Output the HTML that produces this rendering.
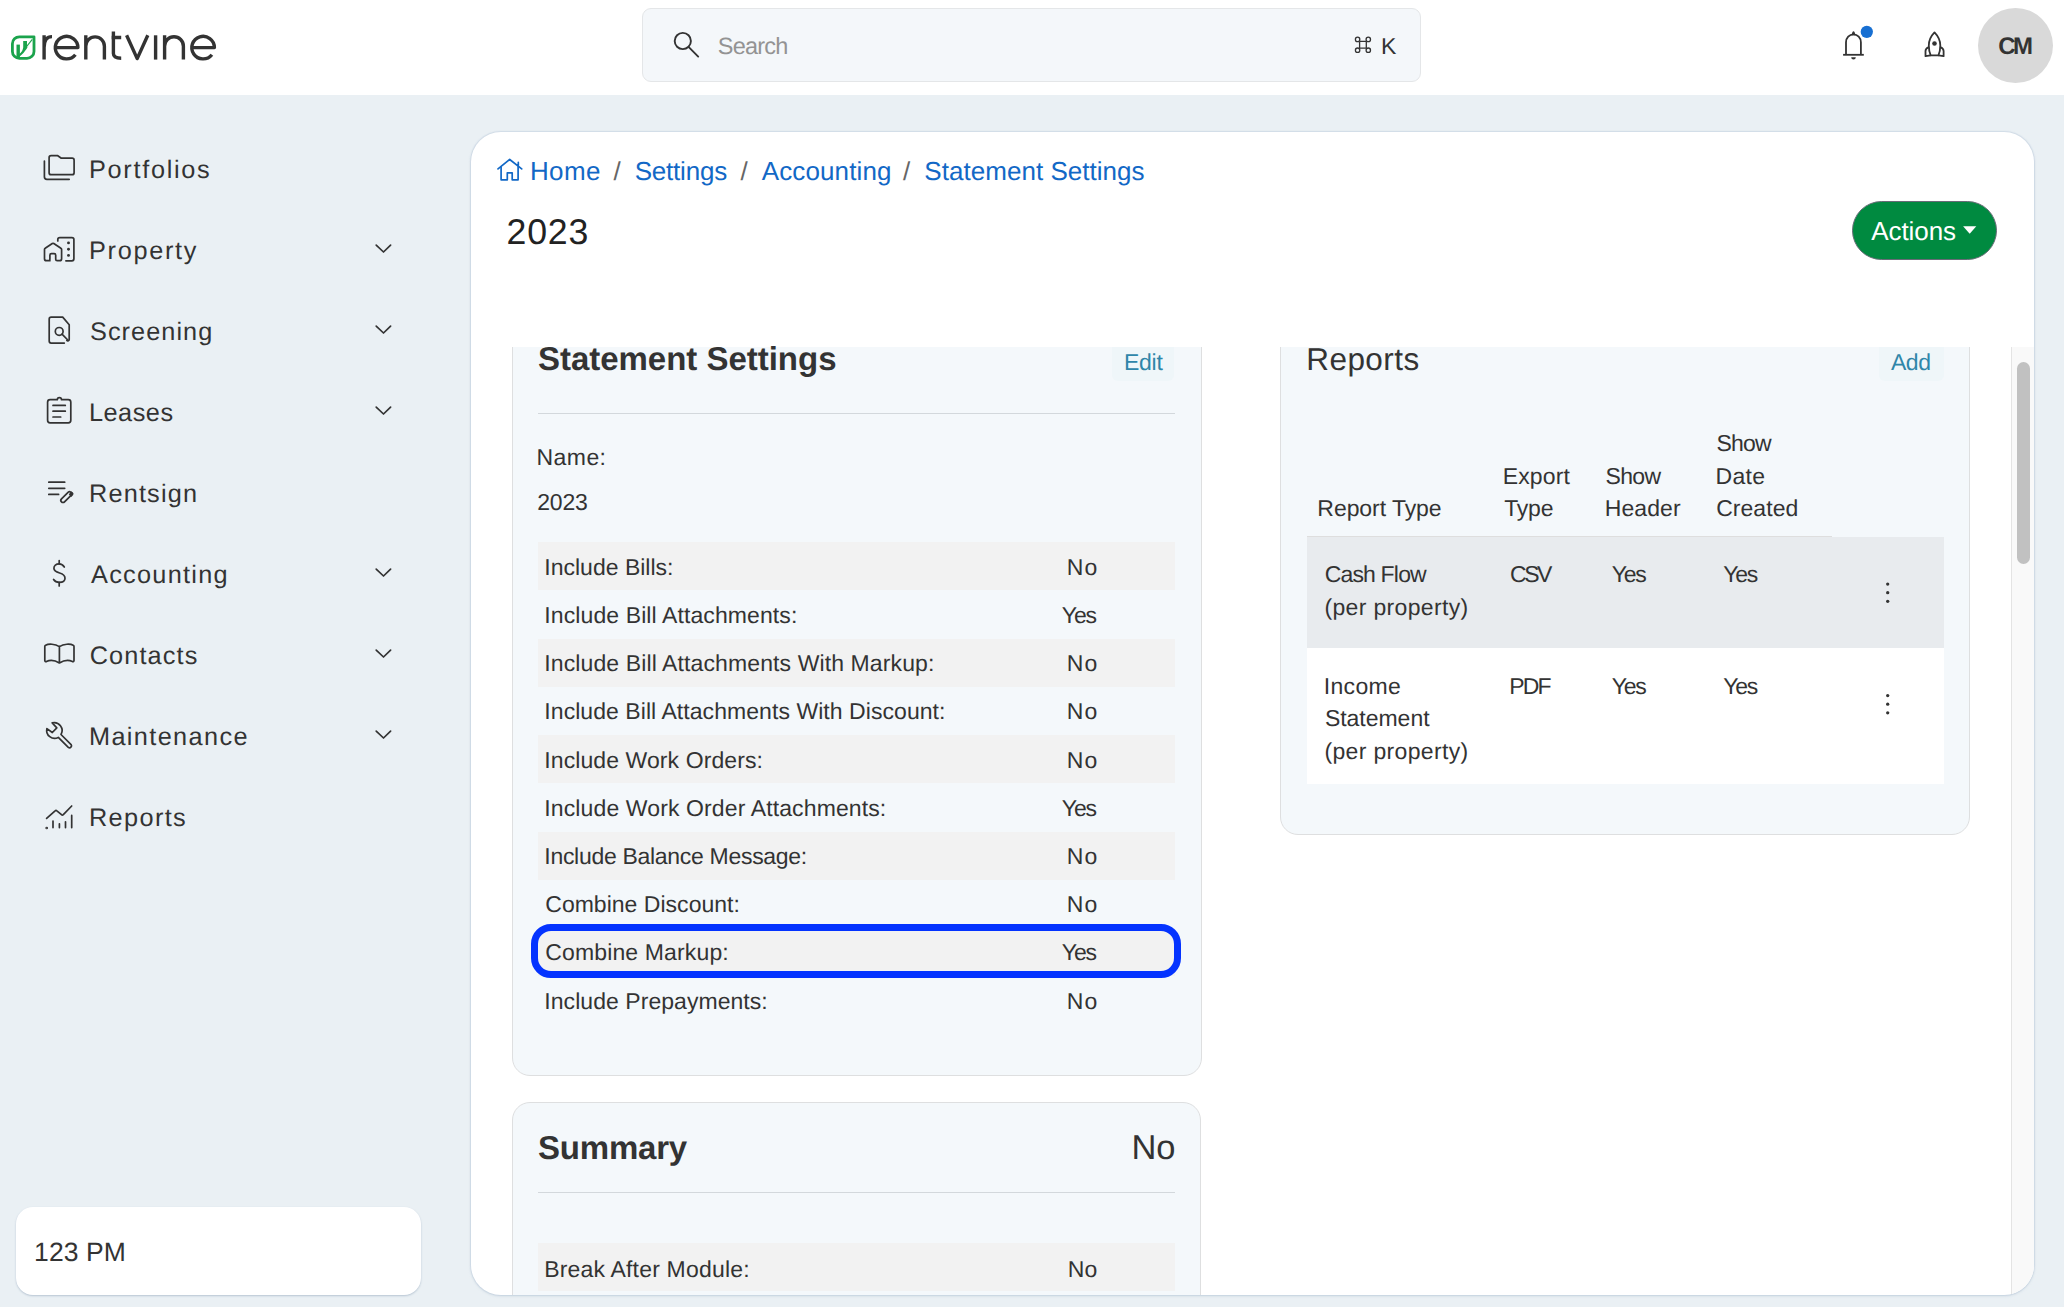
<!DOCTYPE html>
<html><head><meta charset="utf-8"><title>Statement Settings</title>
<style>
html,body{margin:0;padding:0;}
body{width:2064px;height:1307px;overflow:hidden;position:relative;background:#eaf0f4;font-family:"Liberation Sans",sans-serif;}
.a{position:absolute;box-sizing:border-box;}
.t{position:absolute;white-space:nowrap;font-family:"Liberation Sans",sans-serif;text-rendering:geometricPrecision;}
svg{position:absolute;overflow:visible;}

</style></head>
<body>
<!-- header -->
<div class="a" style="left:0;top:0;width:2064px;height:95px;background:#fff;"></div>
<svg style="left:0;top:0" width="240" height="95" viewBox="0 0 240 95">
  <g fill="none" stroke="#1ba34c" stroke-width="2.8" stroke-linejoin="round">
    <path d="M34 36.8 V51.4 a7 7 0 0 1 -7 7 H19.4 a7 7 0 0 1 -7 -7 V43.8 a7 7 0 0 1 7 -7 Z"/>
  </g>
  <g fill="#1ba34c">
    <rect x="16.5" y="44.6" width="3.4" height="13"/>
    <path d="M23.2 41 H27 V47.5 L28.6 45.6 Q24.5 53.5 17.8 57.8 L19.9 53.8 Q23.2 50.5 23.2 47.5 Z"/>
  </g>
  <path d="M32.3 39.4 L18.2 57" stroke="#1ba34c" stroke-width="1.1" fill="none"/>
  <g fill="none" stroke="#333" stroke-width="3.4" stroke-linejoin="round">
    <path d="M44.1 35.3 V59.6 M44.1 47.5 C44.1 40 47 36.6 52 36.6"/>
    <path d="M55.3 47.6 H77.9 A11.3 11.3 0 1 0 75.4 54.7"/>
    <path d="M85.8 35.3 V59.6 M85.8 46.2 A9.2 9.2 0 0 1 104.4 46.2 V59.6"/>
    <path d="M113.4 31.4 V53.5 Q113.4 58.2 121.2 58.2 M111.5 37.5 H121.2"/>
    <path d="M126.6 35.3 L137.2 58.6 L147.8 35.3"/>
    <path d="M155.6 35.3 V59.6"/>
    <path d="M164.6 35.3 V59.6 M164.6 46.2 A9.2 9.2 0 0 1 183.4 46.2 V59.6"/>
    <path d="M191.8 47.6 H214.4 A11.3 11.3 0 1 0 211.9 54.7"/>
  </g>
</svg>
<div class="a" style="left:642px;top:8px;width:778.5px;height:73.5px;background:#f4f7fa;border:1.3px solid #e4e6e8;border-radius:9px;"></div>
<svg style="left:0;top:0" width="2064" height="95" viewBox="0 0 2064 95">
  <g fill="none" stroke="#333" stroke-width="1.9" stroke-linecap="round">
    <circle cx="682.8" cy="41" r="8.1"/>
    <path d="M688.8 47.2 L698.2 56.6"/>
  </g>
  <g fill="none" stroke="#333" stroke-width="1.3">
    <path d="M1359.6 41.4 V48.2 M1366.3 41.4 V48.2 M1359.6 41.4 H1366.3 M1359.6 48.2 H1366.3"/>
    <path d="M1359.6 41.4 A2.7 2.7 0 1 1 1359.6 41.4 Z"/>
    <circle cx="1357.6" cy="39.4" r="2.2"/><circle cx="1368.3" cy="39.4" r="2.2"/>
    <circle cx="1357.6" cy="50.2" r="2.2"/><circle cx="1368.3" cy="50.2" r="2.2"/>
  </g>
  <!-- bell -->
  <g fill="none" stroke="#333" stroke-width="1.8">
    <path d="M1846 54.8 V42.3 A7.45 7.95 0 0 1 1860.9 42.3 V54.8"/>
    <path d="M1843.1 54.8 H1863.8"/>
  </g>
  <path d="M1851.6 35.2 Q1852.2 31.3 1853.5 31.3 Q1854.8 31.3 1855.4 35.2 Z" fill="#333"/>
  <path d="M1851.2 57.2 H1855.8 A2.3 2.3 0 0 1 1851.2 57.2 Z" fill="#333"/>
  <circle cx="1866.8" cy="31.8" r="6.15" fill="#176fd2"/>
  <!-- rocket -->
  <g fill="none" stroke="#333" stroke-width="1.8" stroke-linejoin="round">
    <path d="M1934.5 32.4 C1929.5 37.5 1928.8 42 1928.8 45.5 C1928.8 50 1929.6 52.8 1930.7 55.3 H1938.4 C1939.5 52.8 1940.3 50 1940.3 45.5 C1940.3 42 1939.5 37.5 1934.5 32.4 Z"/>
    <path d="M1928.9 47.2 C1926.8 48 1925.5 49.2 1925.5 51 V56.2 L1930.6 55.3"/>
    <path d="M1940.2 47.2 C1942.3 48 1943.6 49.2 1943.6 51 V56.2 L1938.5 55.3"/>
  </g>
  <circle cx="1934.5" cy="43.5" r="2.3" fill="#333"/>
</svg>
<div class="a" style="left:1978px;top:7.7px;width:75px;height:75px;border-radius:50%;background:#d9d9d9;"></div>

<!-- sidebar icons -->
<svg style="left:0;top:0" width="440" height="900" viewBox="0 0 440 900">
  <g fill="none" stroke="#333" stroke-width="1.7" stroke-linecap="round" stroke-linejoin="round">
    <!-- portfolios -->
    <path d="M49.1 157.7 a2 2 0 0 1 2 -2 h6.7 l3.5 2.5 h10.8 a2 2 0 0 1 2 2 v12.5 a2 2 0 0 1 -2 2 h-21 a2 2 0 0 1 -2 -2 Z"/>
    <path d="M44.4 161.1 V176.8 a2.5 2.5 0 0 0 2.5 2.5 H69.2"/>
    <!-- property -->
    <path d="M49.9 260.7 h-3.4 a2 2 0 0 1 -2 -2 v-9.2 a1.5 1.5 0 0 1 .7 -1.2 l7.1 -4.8 a1.5 1.5 0 0 1 1.5 0 l7.1 4.8 a1.5 1.5 0 0 1 .7 1.2 v9.2 a2 2 0 0 1 -2 2 h-2.4 a1.5 1.5 0 0 1 -1.5 -1.5 v-4 a1.5 1.5 0 0 0 -1.5 -1.5 h-2.8 a1.5 1.5 0 0 0 -1.5 1.5 v4 a1.5 1.5 0 0 1 -1.5 1.5 Z"/>
    <path d="M57.8 241 V239.6 a2 2 0 0 1 2 -2 h12.1 a2 2 0 0 1 2 2 v19.2 a2 2 0 0 1 -2 2 h-6"/>
    <!-- screening -->
    <path d="M64.3 343.1 H51.2 a2 2 0 0 1 -2 -2 V319.1 a2 2 0 0 1 2 -2 H62.7 l6.5 7.6 V339.5 a1.4 1.4 0 0 1 -2.4 1"/>
    <circle cx="59.2" cy="331.4" r="3.9"/>
    <path d="M62 334.2 L67.8 340"/>
    <!-- leases -->
    <path d="M57.3 399.7 H50.1 a2.5 2.5 0 0 0 -2.5 2.5 V420.3 a2.5 2.5 0 0 0 2.5 2.5 H68.3 a2.5 2.5 0 0 0 2.5 -2.5 V402.2 a2.5 2.5 0 0 0 -2.5 -2.5 H61.5 A2.1 2.1 0 0 0 57.3 399.7"/>
    <path d="M53 405.4 H65.3 M53 411.2 H65.3 M53 417 H60.7"/>
    <!-- rentsign -->
    <path d="M48.8 482.2 H64.7 M48.8 488.3 H64.7 M48.8 494.4 H58.6"/>
    <path d="M70.2 491.9 a1.9 1.9 0 0 1 1.1 3.2 l-6.8 6.8 a2.1 2.1 0 0 1 -3 -3 l6.8 -6.8 a1.9 1.9 0 0 1 1.9 -.2 Z"/>
    <!-- dollar -->
    <path d="M64.3 567 C63 564.8 61.3 563.9 59.2 563.9 C56 563.9 53.9 565.8 53.9 568.3 C53.9 571 56.3 572 59.6 573 C63 574 65 575.3 65 578.2 C65 580.8 62.8 582.3 59.2 582.3 C56.8 582.3 54.8 581.3 53.6 579.5"/>
    <path d="M59.2 560.5 V563.9 M59.2 582.3 V586"/>
    <!-- book -->
    <path d="M59.4 646.6 C55 643.8 48.5 643.6 45.6 645.3 a1.5 1.5 0 0 0 -.8 1.3 V660.5 a1.2 1.2 0 0 0 1.6 1.1 C49.6 660 54.8 660.2 59.4 663 C64 660.2 69.2 660 72.4 661.6 a1.2 1.2 0 0 0 1.6 -1.1 V646.6 a1.5 1.5 0 0 0 -.8 -1.3 C70.3 643.6 63.8 643.8 59.4 646.6 Z M59.4 646.6 V663"/>
    <!-- wrench (tabler tool) -->
    <path d="M52.2 722.9 L56.8 727.9 L52.3 732.5 L46.9 728.6 A7.9 7.9 0 0 0 58.3 737.4 L68.3 747.4 A2 2 0 0 0 71.1 744.6 L61 734.5 A7.9 7.9 0 0 0 52.2 722.9 Z"/>
    <!-- reports -->
    <path d="M46.6 818.4 L55.1 810.8 a1.3 1.3 0 0 1 1.8 0 L61.5 814.6 a1.3 1.3 0 0 0 1.8 0 L71.7 806"/>
    <path d="M53 821 V827.6 M59.4 823.8 V827.6 M65.5 821.8 V827.6 M71.7 815.4 V827.6"/>
    <circle cx="46.7" cy="828" r=".5"/>
    <!-- chevrons -->
    <path d="M376.2 245.1 L383.5 252 L390.6 245.1"/>
    <path d="M376.2 326.1 L383.5 333 L390.6 326.1"/>
    <path d="M376.2 407.1 L383.5 414 L390.6 407.1"/>
    <path d="M376.2 569.1 L383.5 576 L390.6 569.1"/>
    <path d="M376.2 650.1 L383.5 657 L390.6 650.1"/>
    <path d="M376.2 731.1 L383.5 738 L390.6 731.1"/>
  </g>
  <g fill="#333">
    <circle cx="68.5" cy="242.9" r="1.45"/><circle cx="68.5" cy="249.2" r="1.45"/><circle cx="68.5" cy="255.4" r="1.45"/>
    <path d="M68.8 494.4 L71.3 496.9 L73.1 495 A2 2 0 0 0 70.3 492.2 Z"/>
  </g>
</svg>

<!-- sidebar bottom box -->
<div class="a" style="left:15.7px;top:1207.4px;width:405.3px;height:87.5px;background:#fff;border-radius:17px;box-shadow:0 1px 2px rgba(120,145,170,.45);"></div>

<!-- main card -->
<div class="a" style="left:470.5px;top:131.5px;width:1563.5px;height:1163.5px;background:#fff;border-radius:30px;box-shadow:0 0 1px 1px rgba(185,200,218,.45),0 1px 3px rgba(160,180,200,.35);"></div>
<svg style="left:0;top:0" width="2064" height="300" viewBox="0 0 2064 300">
  <g fill="none" stroke="#1268c6" stroke-width="1.7" stroke-linejoin="round" stroke-linecap="round">
    <path d="M498 168.9 L509.7 159.5 L521.7 168.9 M518.3 162.4 V165.6"/>
    <path d="M501.1 166.8 V179.8 H507.3 V172.8 H512.2 V179.8 H518.1 V166.8"/>
  </g>
</svg>
<div class="a" style="left:1851.5px;top:201px;width:145px;height:58.6px;border-radius:30px;background:#008a40;border:1.6px solid #676b76;"></div>
<svg style="left:0;top:0" width="2064" height="300" viewBox="0 0 2064 300">
  <path d="M1963.1 226.3 H1976.3 L1969.7 233.8 Z" fill="#fff"/>
</svg>

<!-- scroll area -->
<div class="a" style="left:470.5px;top:347px;width:1563.5px;height:948px;overflow:hidden;border-radius:0 0 30px 30px;">
  <div class="a" style="left:-470.5px;top:-347px;width:2064px;height:1307px;">
    <!-- left card -->
    <div class="a" style="left:512px;top:300px;width:689.5px;height:775.8px;background:#f4f8fb;border:1.5px solid #dedfe0;border-radius:18px;"></div>
    <div class="a" style="left:1112px;top:330px;width:62px;height:50.5px;background:#eff6f9;border-radius:6px;"></div>
    <div class="a" style="left:537.5px;top:412.6px;width:637.5px;height:1.4px;background:#d3d8dc;"></div>
    <div class="a" style="left:538.4px;top:542.3px;width:636.6px;height:48.2px;background:#f2f2f2;"></div>
    <div class="a" style="left:538.4px;top:638.7px;width:636.6px;height:48.2px;background:#f2f2f2;"></div>
    <div class="a" style="left:538.4px;top:735.1px;width:636.6px;height:48.2px;background:#f2f2f2;"></div>
    <div class="a" style="left:538.4px;top:831.5px;width:636.6px;height:48.2px;background:#f2f2f2;"></div>
    <div class="a" style="left:538.4px;top:927.9px;width:636.6px;height:48.2px;background:#f2f2f2;"></div>
    <div class="a" style="left:530.9px;top:924.4px;width:650.1px;height:54.1px;border:7.8px solid #0433ff;border-radius:20px;"></div>
    <!-- summary card -->
    <div class="a" style="left:512.1px;top:1101.7px;width:689px;height:400px;background:#f4f8fb;border:1.5px solid #dedfe0;border-radius:18px;"></div>
    <div class="a" style="left:537.5px;top:1191.8px;width:637.5px;height:1.4px;background:#d3d8dc;"></div>
    <div class="a" style="left:538.4px;top:1243px;width:636.6px;height:48.2px;background:#f2f2f2;"></div>
    <!-- reports card -->
    <div class="a" style="left:1280.3px;top:300px;width:689.5px;height:534.6px;background:#f4f8fb;border:1.5px solid #dedfe0;border-radius:18px;"></div>
    <div class="a" style="left:1878.5px;top:330px;width:65.5px;height:50.5px;background:#eff6f9;border-radius:6px;"></div>
    <div class="a" style="left:1306.5px;top:535.8px;width:525px;height:1.5px;background:#dedede;"></div>
    <div class="a" style="left:1306.5px;top:537px;width:637.3px;height:111px;background:#e8ebee;"></div>
    <div class="a" style="left:1306.5px;top:648px;width:637.3px;height:135.8px;background:#fff;"></div>
    <svg style="left:0;top:0" width="2064" height="800" viewBox="0 0 2064 800">
      <g fill="#333">
        <circle cx="1887.7" cy="584.1" r="1.65"/><circle cx="1887.7" cy="592.7" r="1.65"/><circle cx="1887.7" cy="601.3" r="1.65"/>
        <circle cx="1887.7" cy="695.6" r="1.65"/><circle cx="1887.7" cy="704.2" r="1.65"/><circle cx="1887.7" cy="712.8" r="1.65"/>
      </g>
    </svg>
    <!-- scrollbar -->
    <div class="a" style="left:2011px;top:347px;width:23.5px;height:960px;background:#f9f9f9;border-left:1px solid #e4e4e4;"></div>
    <div class="a" style="left:2017px;top:362.4px;width:13px;height:202px;background:#c1c1c1;border-radius:6.5px;"></div>
  </div>
</div>

<div id="texts">
<div class="t" style="left:717.86px;top:35px;font-size:23.5px;line-height:23.5px;color:#939393;letter-spacing:-0.8px;">Search</div>
<div class="t" style="left:1380.96px;top:35px;font-size:23px;line-height:23px;color:#333;">K</div>
<div class="t" style="left:1998.14px;top:35px;font-size:24px;line-height:24px;color:#333;font-weight:700;letter-spacing:-2.5px;">CM</div>
<div class="t" style="left:88.98px;top:158px;font-size:25.3px;line-height:25.3px;color:#333;letter-spacing:1.7px;">Portfolios</div>
<div class="t" style="left:88.98px;top:239px;font-size:25.3px;line-height:25.3px;color:#333;letter-spacing:1.7px;">Property</div>
<div class="t" style="left:89.99px;top:320px;font-size:25.3px;line-height:25.3px;color:#333;letter-spacing:1.04px;">Screening</div>
<div class="t" style="left:88.98px;top:401px;font-size:25.3px;line-height:25.3px;color:#333;letter-spacing:0.5px;">Leases</div>
<div class="t" style="left:88.98px;top:482px;font-size:25.3px;line-height:25.3px;color:#333;letter-spacing:1.17px;">Rentsign</div>
<div class="t" style="left:91px;top:563px;font-size:25.3px;line-height:25.3px;color:#333;letter-spacing:1.28px;">Accounting</div>
<div class="t" style="left:89.73px;top:644px;font-size:25.3px;line-height:25.3px;color:#333;letter-spacing:1.11px;">Contacts</div>
<div class="t" style="left:88.98px;top:725px;font-size:25.3px;line-height:25.3px;color:#333;letter-spacing:1.37px;">Maintenance</div>
<div class="t" style="left:88.98px;top:806px;font-size:25.3px;line-height:25.3px;color:#333;letter-spacing:1.37px;">Reports</div>
<div class="t" style="left:34.05px;top:1239px;font-size:26.5px;line-height:26.5px;color:#333;letter-spacing:0.11px;">123 PM</div>
<div class="t" style="left:529.92px;top:158px;font-size:26px;line-height:26px;color:#1268c6;letter-spacing:0.42px;">Home</div>
<div class="t" style="left:613.6px;top:158px;font-size:26px;line-height:26px;color:#666;">/</div>
<div class="t" style="left:634.76px;top:158px;font-size:26px;line-height:26px;color:#1268c6;letter-spacing:-0.22px;">Settings</div>
<div class="t" style="left:740.4px;top:158px;font-size:26px;line-height:26px;color:#666;">/</div>
<div class="t" style="left:761.8px;top:158px;font-size:26px;line-height:26px;color:#1268c6;letter-spacing:0.11px;">Accounting</div>
<div class="t" style="left:903px;top:158px;font-size:26px;line-height:26px;color:#666;">/</div>
<div class="t" style="left:924.36px;top:158px;font-size:26px;line-height:26px;color:#1268c6;letter-spacing:0.03px;">Statement Settings</div>
<div class="t" style="left:506.61px;top:215px;font-size:35.7px;line-height:35.7px;color:#222;letter-spacing:0.75px;">2023</div>
<div class="t" style="left:1871.3px;top:218px;font-size:26px;line-height:26px;color:#fff;letter-spacing:-0.08px;">Actions</div>
<div class="t" style="left:537.94px;top:342px;font-size:33px;line-height:33px;color:#333;font-weight:700;letter-spacing:-0.02px;">Statement Settings</div>
<div class="t" style="left:1124.06px;top:351px;font-size:23px;line-height:23px;color:#2f86a9;letter-spacing:-0.28px;">Edit</div>
<div class="t" style="left:536.56px;top:446px;font-size:23px;line-height:23px;color:#333;letter-spacing:0.43px;">Name:</div>
<div class="t" style="left:537.25px;top:491px;font-size:23px;line-height:23px;color:#333;letter-spacing:-0.19px;">2023</div>
<div class="t" style="left:544.33px;top:556px;font-size:23px;line-height:23px;color:#333;">Include Bills:</div>
<div class="t" style="left:1066.66px;top:556px;font-size:23px;line-height:23px;color:#333;letter-spacing:1.17px;">No</div>
<div class="t" style="left:544.33px;top:604px;font-size:23px;line-height:23px;color:#333;letter-spacing:0.1px;">Include Bill Attachments:</div>
<div class="t" style="left:1061.84px;top:604px;font-size:23px;line-height:23px;color:#333;letter-spacing:-1.14px;">Yes</div>
<div class="t" style="left:544.33px;top:652px;font-size:23px;line-height:23px;color:#333;letter-spacing:0.11px;">Include Bill Attachments With Markup:</div>
<div class="t" style="left:1066.66px;top:652px;font-size:23px;line-height:23px;color:#333;letter-spacing:1.17px;">No</div>
<div class="t" style="left:544.33px;top:700px;font-size:23px;line-height:23px;color:#333;letter-spacing:0.06px;">Include Bill Attachments With Discount:</div>
<div class="t" style="left:1066.66px;top:700px;font-size:23px;line-height:23px;color:#333;letter-spacing:1.17px;">No</div>
<div class="t" style="left:544.33px;top:749px;font-size:23px;line-height:23px;color:#333;letter-spacing:0.09px;">Include Work Orders:</div>
<div class="t" style="left:1066.66px;top:749px;font-size:23px;line-height:23px;color:#333;letter-spacing:1.17px;">No</div>
<div class="t" style="left:544.33px;top:797px;font-size:23px;line-height:23px;color:#333;letter-spacing:0.12px;">Include Work Order Attachments:</div>
<div class="t" style="left:1061.84px;top:797px;font-size:23px;line-height:23px;color:#333;letter-spacing:-1.14px;">Yes</div>
<div class="t" style="left:544.33px;top:845px;font-size:23px;line-height:23px;color:#333;letter-spacing:-0.3px;">Include Balance Message:</div>
<div class="t" style="left:1066.66px;top:845px;font-size:23px;line-height:23px;color:#333;letter-spacing:1.17px;">No</div>
<div class="t" style="left:545.25px;top:893px;font-size:23px;line-height:23px;color:#333;letter-spacing:0.02px;">Combine Discount:</div>
<div class="t" style="left:1066.66px;top:893px;font-size:23px;line-height:23px;color:#333;letter-spacing:1.17px;">No</div>
<div class="t" style="left:545.25px;top:941px;font-size:23px;line-height:23px;color:#333;letter-spacing:0.14px;">Combine Markup:</div>
<div class="t" style="left:1061.84px;top:941px;font-size:23px;line-height:23px;color:#333;letter-spacing:-1.14px;">Yes</div>
<div class="t" style="left:544.33px;top:990px;font-size:23px;line-height:23px;color:#333;letter-spacing:0.05px;">Include Prepayments:</div>
<div class="t" style="left:1066.66px;top:990px;font-size:23px;line-height:23px;color:#333;letter-spacing:1.17px;">No</div>
<div class="t" style="left:537.94px;top:1131px;font-size:33px;line-height:33px;color:#333;font-weight:700;letter-spacing:-0.19px;">Summary</div>
<div class="t" style="left:1131.54px;top:1131px;font-size:34.5px;line-height:34.5px;color:#333;letter-spacing:-0.09px;">No</div>
<div class="t" style="left:544.16px;top:1258px;font-size:23px;line-height:23px;color:#333;letter-spacing:0.19px;">Break After Module:</div>
<div class="t" style="left:1067.83px;top:1258px;font-size:23px;line-height:23px;color:#333;">No</div>
<div class="t" style="left:1306.28px;top:344px;font-size:31.5px;line-height:31.5px;color:#333;letter-spacing:0.44px;">Reports</div>
<div class="t" style="left:1891px;top:351px;font-size:23px;line-height:23px;color:#2f86a9;letter-spacing:-0.47px;">Add</div>
<div class="t" style="left:1317.36px;top:497px;font-size:23px;line-height:23px;color:#333;letter-spacing:-0.06px;">Report Type</div>
<div class="t" style="left:1502.76px;top:465px;font-size:23px;line-height:23px;color:#333;letter-spacing:0.14px;">Export</div>
<div class="t" style="left:1504.14px;top:497px;font-size:23px;line-height:23px;color:#333;letter-spacing:-0.16px;">Type</div>
<div class="t" style="left:1605.58px;top:465px;font-size:23px;line-height:23px;color:#333;letter-spacing:-0.7px;">Show</div>
<div class="t" style="left:1604.66px;top:497px;font-size:23px;line-height:23px;color:#333;letter-spacing:0.12px;">Header</div>
<div class="t" style="left:1716.38px;top:432px;font-size:23px;line-height:23px;color:#333;letter-spacing:-0.73px;">Show</div>
<div class="t" style="left:1715.46px;top:465px;font-size:23px;line-height:23px;color:#333;letter-spacing:0.33px;">Date</div>
<div class="t" style="left:1716.15px;top:497px;font-size:23px;line-height:23px;color:#333;letter-spacing:0.05px;">Created</div>
<div class="t" style="left:1324.65px;top:563px;font-size:23px;line-height:23px;color:#333;letter-spacing:-0.82px;">Cash Flow</div>
<div class="t" style="left:1324.42px;top:596px;font-size:23px;line-height:23px;color:#333;letter-spacing:0.34px;">(per property)</div>
<div class="t" style="left:1510.05px;top:563px;font-size:23px;line-height:23px;color:#333;letter-spacing:-2.5px;">CSV</div>
<div class="t" style="left:1611.84px;top:563px;font-size:23px;line-height:23px;color:#333;letter-spacing:-1.24px;">Yes</div>
<div class="t" style="left:1723.34px;top:563px;font-size:23px;line-height:23px;color:#333;letter-spacing:-1.24px;">Yes</div>
<div class="t" style="left:1323.73px;top:675px;font-size:23px;line-height:23px;color:#333;letter-spacing:0.34px;">Income</div>
<div class="t" style="left:1324.88px;top:707px;font-size:23px;line-height:23px;color:#333;letter-spacing:-0.02px;">Statement</div>
<div class="t" style="left:1324.42px;top:740px;font-size:23px;line-height:23px;color:#333;letter-spacing:0.34px;">(per property)</div>
<div class="t" style="left:1509.36px;top:675px;font-size:23px;line-height:23px;color:#333;letter-spacing:-1.93px;">PDF</div>
<div class="t" style="left:1611.84px;top:675px;font-size:23px;line-height:23px;color:#333;letter-spacing:-1.24px;">Yes</div>
<div class="t" style="left:1723.34px;top:675px;font-size:23px;line-height:23px;color:#333;letter-spacing:-1.24px;">Yes</div>
</div>
</body></html>
